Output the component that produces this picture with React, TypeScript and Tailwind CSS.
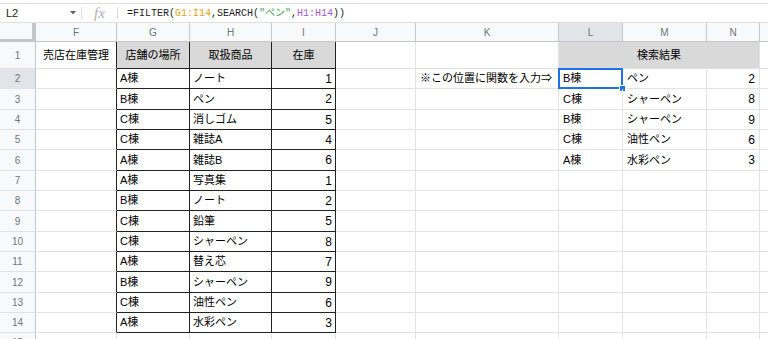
import React from "react";

const FONT = '"Liberation Sans", "Noto Sans CJK JP", Arial, sans-serif';

const widths = [81, 73, 82, 64, 80, 143, 64, 84, 53, 60];
const letters = ["F", "G", "H", "I", "J", "K", "L", "M", "N", ""];
const rowHeights = [20, 21, 20, 20, 21, 20, 20, 21, 20, 20, 21, 20, 20];

const table: [string, string, string][] = [
  ["A棟", "ノート", "1"],
  ["B棟", "ペン", "2"],
  ["C棟", "消しゴム", "5"],
  ["C棟", "雑誌A", "4"],
  ["A棟", "雑誌B", "6"],
  ["A棟", "写真集", "1"],
  ["B棟", "ノート", "2"],
  ["C棟", "鉛筆", "5"],
  ["C棟", "シャーペン", "8"],
  ["A棟", "替え芯", "7"],
  ["B棟", "シャーペン", "9"],
  ["C棟", "油性ペン", "6"],
  ["A棟", "水彩ペン", "3"],
];

const result: [string, string, string][] = [
  ["B棟", "ペン", "2"],
  ["C棟", "シャーペン", "8"],
  ["B棟", "シャーペン", "9"],
  ["C棟", "油性ペン", "6"],
  ["A棟", "水彩ペン", "3"],
];

function RowHead({ n, h, active }: { n: number; h: number; active?: boolean }) {
  return (
    <div
      className={`shrink-0 w-[36px] flex items-center justify-center border-r border-b border-r-[#c4c7c5] border-b-[#e1e1e1] text-[10px] text-[#70757a] ${
        active ? "bg-[#e1e5ea]" : "bg-[#f8f9fa]"
      }`}
      style={{ height: h }}
    >
      {n}
    </div>
  );
}

export default function App() {
  return (
    <div className="w-[768px] h-[339px] overflow-hidden bg-white text-[#000]" style={{ fontFamily: FONT }}>
      {/* formula bar */}
      <div className="pt-[3px]">
        <div className="h-[20px] border-t border-b border-[#e0e0e0] flex items-center">
          <div className="w-[81px] flex items-center pl-[6px] pr-[4px] text-[11px] text-[#202124] shrink-0">
            <span className="flex-1">L2</span>
            <svg width="6" height="4" viewBox="0 0 6 4" className="mr-[1px]">
              <path d="M0 0 L6 0 L3 3.5 Z" fill="#5f6368" />
            </svg>
          </div>
          <div className="w-px h-[12px] bg-[#dadce0] shrink-0" />
          <div className="w-[35px] flex items-center justify-center shrink-0">
            <span className="italic text-[15px] text-[#b0b0b0] leading-none" style={{ fontFamily: '"Liberation Serif", serif' }}>
              fx
            </span>
          </div>
          <div className="w-px h-[12px] bg-[#dadce0] shrink-0" />
          <div className="pl-[9px] text-[10px] text-[#202124] whitespace-nowrap" style={{ fontFamily: '"Liberation Mono", "Noto Sans CJK JP", monospace' }}>
            =FILTER(<span className="text-[#e8a40a]">G1:I14</span>,SEARCH(<span className="text-[#3aa757]">"ペン"</span>,<span className="text-[#a659d8]">H1:H14</span>))
          </div>
        </div>
      </div>

      {/* column headers */}
      <div className="flex h-[19px]">
        <div className="shrink-0 w-[36px] h-[19px] bg-[#f8f9fa] border-r-[4px] border-b-[3px] border-[#c4c7c5]" />
        {letters.map((l, i) => (
          <div
            key={i}
            className={`shrink-0 h-[19px] flex items-center justify-center border-r border-b border-[#c4c7c5] text-[10px] text-[#70757a] ${
              l === "L" ? "bg-[#e1e5ea]" : "bg-[#f8f9fa]"
            }`}
            style={{ width: widths[i] }}
          >
            {l}
          </div>
        ))}
      </div>

      {/* row 1 */}
      <div className="flex h-[27px] text-[11px]">
        <RowHead n={1} h={27} />
        <div className="shrink-0 w-[81px] flex items-center justify-center border-r border-b border-r-[#222] border-b-[#e2e3e3]">売店在庫管理</div>
        <div className="shrink-0 w-[73px] flex items-center justify-center bg-[#d9d9d9] border-r border-b border-[#222]">店舗の場所</div>
        <div className="shrink-0 w-[82px] flex items-center justify-center bg-[#d9d9d9] border-r border-b border-[#222]">取扱商品</div>
        <div className="shrink-0 w-[64px] flex items-center justify-center bg-[#d9d9d9] border-r border-b border-[#222]">在庫</div>
        <div className="shrink-0 w-[80px] border-r border-b border-[#e2e3e3]" />
        <div className="shrink-0 w-[143px] border-r border-b border-[#e2e3e3]" />
        <div className="shrink-0 w-[201px] flex items-center justify-center bg-[#d9d9d9] border-r border-b border-[#e2e3e3]">検索結果</div>
        <div className="shrink-0 w-[60px] border-r border-b border-[#e2e3e3]" />
      </div>

      {/* rows 2-14 */}
      {table.map((r, idx) => {
        const h = rowHeights[idx];
        const res = result[idx];
        const selected = idx === 0;
        return (
          <div key={idx} className="flex text-[11px]" style={{ height: h }}>
            <RowHead n={idx + 2} h={h} active={selected} />
            <div className="shrink-0 w-[81px] border-r border-b border-r-[#222] border-b-[#e2e3e3]" />
            <div className="shrink-0 w-[73px] flex items-center pl-[3px] border-r border-b border-[#222]">{r[0]}</div>
            <div className="shrink-0 w-[82px] flex items-center pl-[3px] border-r border-b border-[#222]">{r[1]}</div>
            <div className="shrink-0 w-[64px] flex items-center justify-end pr-[3px] border-r border-b border-[#222] text-[12px]">{r[2]}</div>
            <div className="shrink-0 w-[80px] border-r border-b border-[#e2e3e3]" />
            <div className="shrink-0 w-[143px] flex items-center pl-[4px] border-r border-b border-[#e2e3e3] whitespace-nowrap">
              {selected ? "※この位置に関数を入力⇒" : ""}
            </div>
            <div className="relative shrink-0 w-[64px] flex items-center pl-[4px] border-r border-b border-[#e2e3e3]">
              {res ? res[0] : ""}
              {selected && (
                <>
                  <div className="absolute left-[-1px] top-[-1px] right-[-1px] bottom-[-1px] border-2 border-[#1a73e8]" />
                  <div className="absolute right-[-4px] bottom-[-4px] w-[7px] h-[7px] bg-[#1a73e8] border border-white" />
                </>
              )}
            </div>
            <div className="shrink-0 w-[84px] flex items-center pl-[4px] border-r border-b border-[#e2e3e3]">{res ? res[1] : ""}</div>
            <div className="shrink-0 w-[53px] flex items-center justify-end pr-[4px] border-r border-b border-[#e2e3e3] text-[12px]">{res ? res[2] : ""}</div>
            <div className="shrink-0 w-[60px] border-r border-b border-[#e2e3e3]" />
          </div>
        );
      })}

      {/* row 15 */}
      <div className="flex h-[20px]">
        <RowHead n={15} h={20} />
        {widths.map((w, i) => (
          <div key={i} className="shrink-0 h-[20px] border-r border-b border-[#e2e3e3]" style={{ width: w }} />
        ))}
      </div>
    </div>
  );
}
